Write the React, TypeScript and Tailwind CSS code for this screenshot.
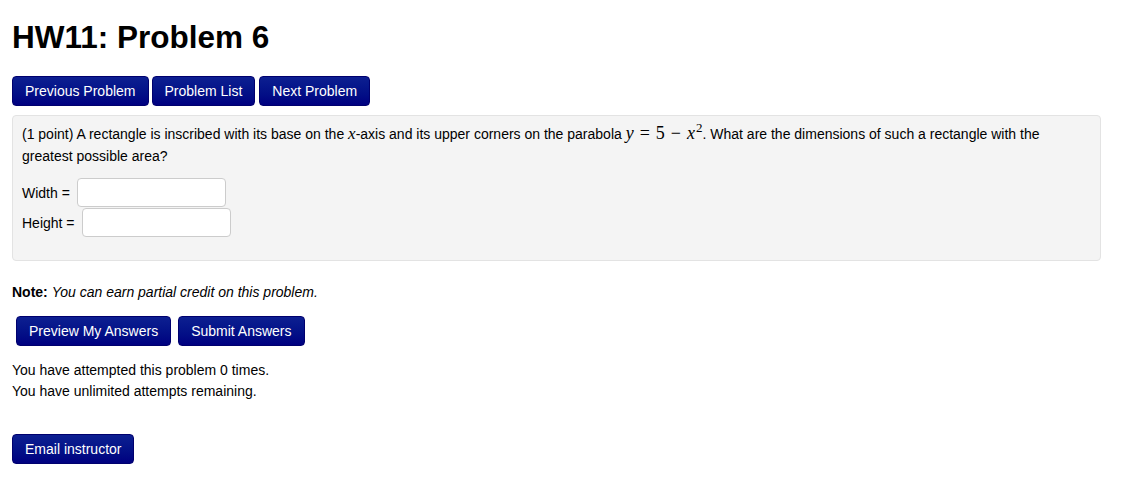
import React from "react";

const btn =
  "inline-flex items-center h-[30px] px-[12px] rounded-[4px] border border-[#00006e] bg-gradient-to-b from-[#0d1f91] to-[#000080] text-white text-[14px] leading-[20px]";

export default function App() {
  return (
    <div className="w-[1125px] min-h-[485px] bg-white text-[#000] font-['Liberation_Sans',Arial,sans-serif] text-[14px] leading-[20px] pl-[12px] pr-[24px]">
      <h1 className="pt-[19px] text-[31.5px] leading-[36px] font-bold text-black">HW11: Problem 6</h1>
      <div className="mt-[21px] flex gap-[3px]">
        <button className={btn}>Previous Problem</button>
        <button className={btn}>Problem List</button>
        <button className={btn + " ml-[1px]"}>Next Problem</button>
      </div>
      <div className="mt-[9px] bg-[#f4f4f4] border border-[#e3e3e3] rounded-[4px] pt-[7px] px-[9px] pb-[23px]">
        <p className="leading-[22px]">
          (1 point) A rectangle is inscribed with its base on the{" "}
          <span className="font-['Liberation_Serif',serif] italic text-[17px] leading-[18px]">x</span>-axis and its upper corners on the parabola{" "}
          <span className="font-['Liberation_Serif',serif] text-[18px] leading-[18px] whitespace-nowrap">
            <span className="italic">y</span>
            <span className="mx-[6px]">=</span>
            <span>5</span>
            <span className="mx-[6px]">−</span>
            <span className="italic">x</span>
            <sup className="text-[13px] relative top-[-7px] ml-[1px]">2</sup>
          </span>
          . What are the dimensions of such a rectangle with the greatest possible area?
        </p>
        <div className="mt-[11px] flex flex-col gap-[1px]">
          <div className="flex items-center gap-[7px]">
            <span>Width =</span>
            <input className="w-[149px] h-[29px] bg-white border border-[#cccccc] rounded-[4px]" />
          </div>
          <div className="flex items-center gap-[7px]">
            <span>Height =</span>
            <input className="w-[149px] h-[29px] bg-white border border-[#cccccc] rounded-[4px]" />
          </div>
        </div>
      </div>
      <p className="mt-[21px]">
        <b>Note:</b> <i>You can earn partial credit on this problem.</i>
      </p>
      <div className="mt-[14px] ml-[4px] flex gap-[7px]">
        <button className={btn}>Preview My Answers</button>
        <button className={btn}>Submit Answers</button>
      </div>
      <p className="mt-[14px]">You have attempted this problem 0 times.</p>
      <p className="mt-[1px]">You have unlimited attempts remaining.</p>
      <div className="mt-[33px] pb-[20px]">
        <button className={btn}>Email instructor</button>
      </div>
    </div>
  );
}
